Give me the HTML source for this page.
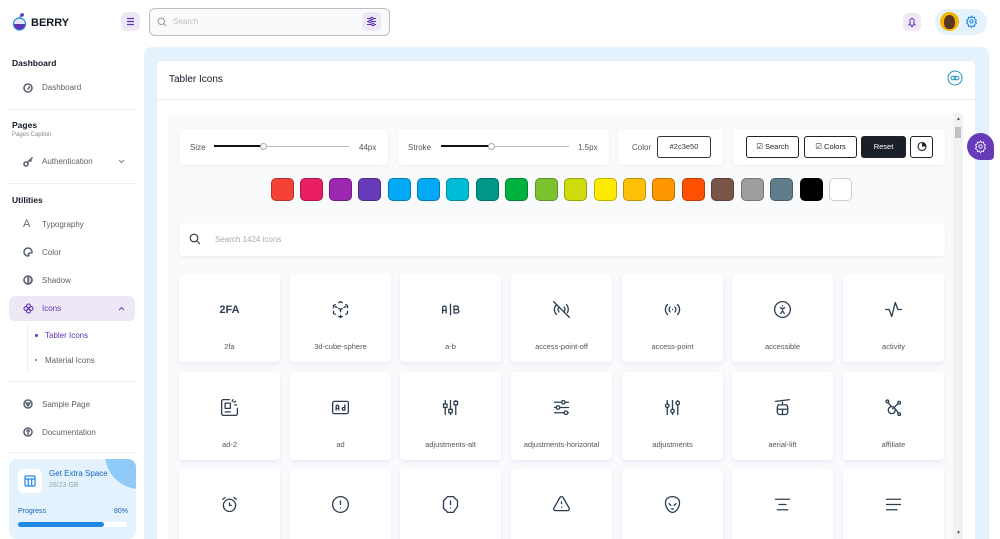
<!DOCTYPE html>
<html><head><meta charset="utf-8"><style>
*{box-sizing:border-box;margin:0;padding:0}
html{overflow:hidden;height:539px}
body{width:1000px;height:539px;overflow:hidden;background:#fff;font-family:"Liberation Sans",sans-serif;position:relative;color:#364152}
.a{position:absolute}
.sec{font-size:8.5px;font-weight:bold;color:#121926}
.it{font-size:8px;color:#616161}
.ic{stroke:#5b6470;fill:none;stroke-width:1.6;stroke-linecap:round;stroke-linejoin:round}
.card{position:absolute;width:101px;height:88px;background:#fff;border-radius:4px;box-shadow:0 2px 4px rgba(120,120,180,.12)}
.card svg{position:absolute;left:40px;top:25px;width:21px;height:21px;stroke:#2c3e50;fill:none;stroke-width:1.5;stroke-linecap:round;stroke-linejoin:round}
.card span{position:absolute;left:0;right:0;top:68px;text-align:center;font-size:7.5px;color:#555}
.panel{position:absolute;top:129px;height:36px;background:#fff;border-radius:4px;box-shadow:0 1px 3px rgba(0,0,0,.06);font-size:8px;color:#555}
.sw{position:absolute;top:178px;width:23px;height:23px;border-radius:5px;border:1px solid rgba(0,0,0,.25)}
.btn{position:absolute;top:136px;height:22px;border:1.3px solid #222;border-radius:3px;font-size:7.5px;color:#222;text-align:center;line-height:20px;background:#fff}
</style></head><body>
<svg class="a" style="left:12px;top:12px" width="16" height="20" viewBox="0 0 16 20"><circle cx="7.5" cy="12" r="6" fill="#e3e7fb" stroke="#1e88e5" stroke-width="1.2"/><path d="M2 12a5.5 5.5 0 0 0 11 0z" fill="#5e35b1"/><path d="M8 6c0-2 2-4 4-4" stroke="#1e88e5" stroke-width="1.3" fill="none"/><circle cx="10" cy="3" r="1.8" fill="#5e35b1"/></svg>
<div class="a" style="left:31px;top:17px;font-size:11px;font-weight:bold;color:#121926">BERRY</div>
<div class="a" style="left:121px;top:12px;width:19px;height:19px;border-radius:5px;background:#ede7f6"><svg width="19" height="19" viewBox="0 0 19 19"><path d="M6 6.5h7M6 9.5h7M6 12.5h7" stroke="#5e35b1" stroke-width="1.2"/></svg></div>
<div class="a" style="left:149px;top:8px;width:241px;height:28px;border:1px solid #bdbdbd;border-radius:6px;background:#f8fafc"></div>
<svg class="a" style="left:157px;top:17px" width="10" height="10" viewBox="0 0 10 10"><circle cx="4.3" cy="4.3" r="3.2" stroke="#999" fill="none"/><path d="M6.7 6.7L9 9" stroke="#999"/></svg>
<div class="a" style="left:173px;top:17px;font-size:8px;color:#c0c0c0">Search</div>
<div class="a" style="left:362px;top:12px;width:19px;height:19px;border-radius:5px;background:#ede7f6"><svg width="19" height="19" viewBox="0 0 19 19" stroke="#5e35b1" fill="none" stroke-width="1"><path d="M5 6.5h9M5 9.5h9M5 12.5h9"/><circle cx="10" cy="6.5" r="1.3" fill="#ede7f6"/><circle cx="8" cy="9.5" r="1.3" fill="#ede7f6"/><circle cx="11" cy="12.5" r="1.3" fill="#ede7f6"/></svg></div>
<div class="a" style="left:903px;top:13px;width:18px;height:18px;border-radius:5px;background:#ede7f6"><svg width="18" height="18" viewBox="0 0 18 18"><path d="M6 12h6l-1-1.5v-3a2 2 0 0 0-4 0v3zM8 13.5h2" stroke="#5e35b1" fill="none" stroke-width="1"/></svg></div>
<div class="a" style="left:935px;top:9px;width:52px;height:26px;border-radius:13px;background:#e3f2fd"></div>
<div class="a" style="left:940px;top:12px;width:19px;height:19px;border-radius:50%;background:#f5b400"><div style="margin:3px 0 0 4px;width:11px;height:14px;border-radius:50% 50% 40% 40%;background:#5a3521"></div></div>
<svg class="a" style="left:965px;top:15px" width="13" height="13" viewBox="0 0 24 24" fill="none" stroke="#1e88e5" stroke-width="2"><circle cx="12" cy="12" r="3"/><path d="M12 2l2 3 3.5-1 .5 3.5 3 2-2 3 2 3-3 2-.5 3.5-3.5-1-2 3-2-3-3.5 1-.5-3.5-3-2 2-3-2-3 3-2 .5-3.5 3.5 1z"/></svg>

<div class="a sec" style="left:12px;top:58px">Dashboard</div>
<svg class="a ic" style="left:23px;top:83px" width="10" height="10" viewBox="0 0 10 10" stroke-width="0.9"><circle cx="5" cy="5" r="4"/><path d="M5 6l1.5-2"/></svg>
<div class="a it" style="left:42px;top:83px">Dashboard</div>
<div class="a" style="left:8px;top:109px;width:128px;height:1px;background:#eee"></div>
<div class="a sec" style="left:12px;top:120px">Pages</div>
<div class="a" style="left:12px;top:132px;font-size:6px;color:#888">Pages Caption</div>
<svg class="a ic" style="left:23px;top:157px" width="10" height="10" viewBox="0 0 10 10" stroke-width="0.9"><circle cx="3" cy="7" r="2"/><path d="M4.5 5.5L9 1M7 3l1 1"/></svg>
<div class="a it" style="left:42px;top:157px">Authentication</div>
<svg class="a" style="left:118px;top:159px" width="7" height="5" viewBox="0 0 7 5"><path d="M1 1l2.5 2.5L6 1" stroke="#777" fill="none" stroke-width=".9"/></svg>
<div class="a" style="left:8px;top:183px;width:128px;height:1px;background:#eee"></div>
<div class="a sec" style="left:12px;top:195px">Utilities</div>
<div class="a" style="left:23px;top:218px;font-size:11px;color:#666">A</div>
<div class="a it" style="left:42px;top:220px">Typography</div>
<svg class="a ic" style="left:23px;top:247px" width="10" height="10" viewBox="0 0 10 10" stroke-width="0.9"><path d="M5 1a4 4 0 1 0 0 8c1 0 1-1 .5-1.5S6 6 7 6h1a1 1 0 0 0 1-1 4 4 0 0 0-4-4z"/></svg>
<div class="a it" style="left:42px;top:248px">Color</div>
<svg class="a ic" style="left:23px;top:275px" width="10" height="10" viewBox="0 0 10 10" stroke-width="0.9"><circle cx="5" cy="5" r="4"/><path d="M5 1a4 4 0 0 1 0 8z" fill="#ccc"/></svg>
<div class="a it" style="left:42px;top:276px">Shadow</div>
<div class="a" style="left:9px;top:296px;width:126px;height:25px;border-radius:6px;background:#ede7f6"></div>
<svg class="a" style="left:23px;top:303px" width="11" height="11" viewBox="0 0 10 10" stroke="#5e35b1" fill="none" stroke-width="1"><circle cx="5" cy="2.7" r="1.8"/><circle cx="5" cy="7.3" r="1.8"/><circle cx="2.7" cy="5" r="1.8"/><circle cx="7.3" cy="5" r="1.8"/></svg>
<div class="a" style="left:42px;top:304px;font-size:8px;color:#5e35b1">Icons</div>
<svg class="a" style="left:118px;top:306px" width="7" height="5" viewBox="0 0 7 5"><path d="M1 4l2.5-2.5L6 4" stroke="#5e35b1" fill="none" stroke-width=".9"/></svg>
<div class="a" style="left:27px;top:323px;width:1px;height:50px;background:#eee"></div>
<div class="a" style="left:35px;top:334px;width:3px;height:3px;border-radius:50%;background:#5e35b1"></div>
<div class="a" style="left:45px;top:331px;font-size:8px;color:#5e35b1">Tabler Icons</div>
<div class="a" style="left:35px;top:359px;width:2px;height:2px;border-radius:50%;background:#777"></div>
<div class="a it" style="left:45px;top:356px">Material Icons</div>
<div class="a" style="left:8px;top:381px;width:128px;height:1px;background:#eee"></div>
<svg class="a ic" style="left:23px;top:399px" width="10" height="10" viewBox="0 0 10 10" stroke-width="0.9"><circle cx="5" cy="5" r="4"/><path d="M3 4l2 3 2-3z"/></svg>
<div class="a it" style="left:42px;top:400px">Sample Page</div>
<svg class="a ic" style="left:23px;top:427px" width="10" height="10" viewBox="0 0 10 10" stroke-width="0.9"><circle cx="5" cy="5" r="4"/><path d="M4 4a1 1 0 1 1 1.3 1L5 6M5 7.3v.1"/></svg>
<div class="a it" style="left:42px;top:428px">Documentation</div>
<div class="a" style="left:8px;top:452px;width:128px;height:1px;background:#f5eeee"></div>
<div class="a" style="left:9px;top:459px;width:127px;height:80px;border-radius:8px;background:#e3f2fd;overflow:hidden"><div style="position:absolute;left:96px;top:-40px;width:70px;height:70px;border-radius:50%;background:#90caf9"></div></div>
<div class="a" style="left:18px;top:469px;width:24px;height:24px;border-radius:5px;background:#fff"><svg width="24" height="24" viewBox="0 0 24 24" stroke="#1e88e5" fill="none" stroke-width="1.2"><rect x="7" y="7" width="10" height="10" rx="1"/><path d="M7 10h10M10.3 10v7M13.7 10v7"/></svg></div>
<div class="a" style="left:49px;top:469px;font-size:8px;color:#1565c0">Get Extra Space</div>
<div class="a" style="left:49px;top:482px;font-size:7px;color:#9aa">28/23 GB</div>
<div class="a" style="left:18px;top:508px;font-size:7px;color:#1565c0">Progress</div>
<div class="a" style="left:114px;top:508px;font-size:7px;color:#1565c0">80%</div>
<div class="a" style="left:18px;top:522px;width:109px;height:5px;border-radius:3px;background:#fff"><div style="width:86px;height:5px;border-radius:3px;background:#1e88e5"></div></div>

<div class="a" style="left:144px;top:47px;width:845px;height:500px;border-radius:8px;background:#e3f2fd"></div>
<div class="a" style="left:156px;top:60px;width:820px;height:490px;border-radius:6px;background:#fff;border:1px solid #e8eef5"></div>
<div class="a" style="left:169px;top:74px;font-size:10px;color:#121926">Tabler Icons</div>
<svg class="a" style="left:947px;top:70px" width="16" height="16" viewBox="0 0 16 16" fill="none" stroke="#2196c3" stroke-width="1"><circle cx="8" cy="8" r="7"/><rect x="4" y="6.3" width="5" height="3.4" rx="1.7"/><rect x="7" y="6.3" width="5" height="3.4" rx="1.7"/></svg>
<div class="a" style="left:157px;top:99px;width:818px;height:1px;background:#eaeaea"></div>
<div class="a" style="left:168px;top:113px;width:786px;height:430px;background:#f8fafc;border-radius:4px"></div>
<div class="a" style="left:953px;top:113px;width:10px;height:426px;background:#f1f1f1"></div>
<div class="a" style="left:955px;top:127px;width:6px;height:11px;background:#c1c1c1"></div>
<div class="a" style="left:956px;top:116px;font-size:5px;color:#555">▲</div>
<div class="a" style="left:956px;top:530px;font-size:5px;color:#555">▼</div>

<div class="panel" style="left:179px;width:209px"><span class="a" style="left:11px;top:14px">Size</span><div class="a" style="left:35px;top:17px;width:135px;height:1px;background:#bbb"></div><div class="a" style="left:35px;top:16px;width:50px;height:2px;background:#111"></div><div class="a" style="left:81px;top:14px;width:7px;height:7px;border-radius:50%;background:#fff;border:1px solid #aaa"></div><span class="a" style="left:180px;top:14px">44px</span></div>
<div class="panel" style="left:398px;width:211px"><span class="a" style="left:10px;top:14px">Stroke</span><div class="a" style="left:43px;top:17px;width:128px;height:1px;background:#bbb"></div><div class="a" style="left:43px;top:16px;width:50px;height:2px;background:#111"></div><div class="a" style="left:90px;top:14px;width:7px;height:7px;border-radius:50%;background:#fff;border:1px solid #aaa"></div><span class="a" style="left:180px;top:14px">1.5px</span></div>
<div class="panel" style="left:618px;width:105px"><span class="a" style="left:14px;top:14px">Color</span><div class="a" style="left:39px;top:7px;width:54px;height:22px;border:1.3px solid #333;border-radius:3px;text-align:center;line-height:19px;font-size:7.5px;color:#333">#2c3e50</div></div>
<div class="panel" style="left:733px;width:212px"></div>
<div class="btn" style="left:746px;width:53px">☑ Search</div>
<div class="btn" style="left:804px;width:53px">☑ Colors</div>
<div class="btn" style="left:861px;width:45px;background:#1b1f2a;color:#fff">Reset</div>
<div class="btn" style="left:910px;width:23px"><svg width="20" height="19" viewBox="0 0 20 19"><circle cx="10" cy="9.5" r="4" fill="none" stroke="#222" stroke-width="1.1"/><path d="M10 9.5V5.5a4 4 0 0 1 4 4z" fill="#222"/></svg></div>
<div class="a" style="left:967px;top:133px;width:27px;height:27px;border-radius:14px 14px 4px 14px;background:#673ab7"><svg width="27" height="27" viewBox="0 0 24 24" fill="none" stroke="#fff" stroke-width="1.5"><g transform="translate(6 6) scale(.5)"><circle cx="12" cy="12" r="3"/><path d="M12 2l2 3 3.5-1 .5 3.5 3 2-2 3 2 3-3 2-.5 3.5-3.5-1-2 3-2-3-3.5 1-.5-3.5-3-2 2-3-2-3 3-2 .5-3.5 3.5 1z"/></g></svg></div>

<div class="sw" style="left:271px;background:#f44336"></div>
<div class="sw" style="left:300px;background:#e91e63"></div>
<div class="sw" style="left:329px;background:#9c27b0"></div>
<div class="sw" style="left:358px;background:#673ab7"></div>
<div class="sw" style="left:388px;background:#03a9f4"></div>
<div class="sw" style="left:417px;background:#03a9f4"></div>
<div class="sw" style="left:446px;background:#00bcd4"></div>
<div class="sw" style="left:476px;background:#009688"></div>
<div class="sw" style="left:505px;background:#00b140"></div>
<div class="sw" style="left:535px;background:#7cc22f"></div>
<div class="sw" style="left:564px;background:#cddc0a"></div>
<div class="sw" style="left:594px;background:#ffeb00"></div>
<div class="sw" style="left:623px;background:#ffc107"></div>
<div class="sw" style="left:652px;background:#ff9800"></div>
<div class="sw" style="left:682px;background:#ff4f00"></div>
<div class="sw" style="left:711px;background:#795548"></div>
<div class="sw" style="left:741px;background:#9e9e9e"></div>
<div class="sw" style="left:770px;background:#607d8b"></div>
<div class="sw" style="left:800px;background:#000"></div>
<div class="sw" style="left:829px;background:#fff;border-color:#ccc"></div>

<div class="a" style="left:179px;top:223px;width:766px;height:33px;background:#fff;border-radius:4px;box-shadow:0 1px 3px rgba(0,0,0,.06)"></div>
<svg class="a" style="left:189px;top:233px" width="12" height="12" viewBox="0 0 12 12"><circle cx="5" cy="5" r="3.8" stroke="#333" fill="none" stroke-width="1.1"/><path d="M8 8l3 3" stroke="#333" stroke-width="1.1"/></svg>
<div class="a" style="left:215px;top:235px;font-size:8px;color:#aaa">Search 1424 icons</div>

<div class="card" style="left:179px;top:274px"><div style="position:absolute;left:0;right:0;top:30px;text-align:center;font-size:11px;font-weight:bold;color:#2c3e50">2FA</div><span>2fa</span></div>
<div class="card" style="left:290px;top:274px"><svg viewBox="0 0 24 24"><path d="M6 17.6l-2-1.1v-2.5M4 10V7.5l2-1.1M10 4.1L12 3l2 1.1M18 6.4l2 1.1V10M20 14v2.5l-2 1.1M14 19.9L12 21l-2-1.1M12 12l2-1.1M18 8.6l-2 1.1M12 12l-2-1.1M6 8.6l2 1.1M12 12v2.5M12 18.5V21"/></svg><span>3d-cube-sphere</span></div>
<div class="card" style="left:400px;top:274px"><svg viewBox="0 0 24 24"><path d="M3 16V10a2 2 0 0 1 4 0v6M3 13h4M12 6v12M16 8h3a2 2 0 0 1 0 4h-3zM16 12h3.5a2 2 0 0 1 0 4H16z"/></svg><span>a-b</span></div>
<div class="card" style="left:511px;top:274px"><svg viewBox="0 0 24 24"><path d="M12 12v.01M14.8 9.2a4 4 0 0 1 .5 4.8M9.2 9.2a4 4 0 0 0 0 5.6M17.7 6.3a8 8 0 0 1 1 9.3M6.3 6.3a8 8 0 0 0 0 11.4M3 3l18 18"/></svg><span>access-point-off</span></div>
<div class="card" style="left:622px;top:274px"><svg viewBox="0 0 24 24"><path d="M12 12v.01M14.8 9.2a4 4 0 0 1 0 5.6M17.7 6.3a8 8 0 0 1 0 11.4M9.2 14.8a4 4 0 0 1 0-5.6M6.3 17.7a8 8 0 0 1 0-11.4"/></svg><span>access-point</span></div>
<div class="card" style="left:732px;top:274px"><svg viewBox="0 0 24 24"><circle cx="12" cy="12" r="9"/><path d="M10 16.5l2-3 2 3M12 13.5V11l2.5-1M12 11l-2.5-1M12 7.5v.01"/></svg><span>accessible</span></div>
<div class="card" style="left:843px;top:274px"><svg viewBox="0 0 24 24"><path d="M3 12h4l3 8 4-16 3 8h4"/></svg><span>activity</span></div>
<div class="card" style="left:179px;top:372px"><svg viewBox="0 0 24 24"><path d="M11.9 3H5a2 2 0 0 0-2 2v14a2 2 0 0 0 2 2h14a2 2 0 0 0 2-2v-6M7 7h6v6H7zM7 17h6M16 3l-1 2M19 5l-2 1M20 9h-2"/></svg><span>ad-2</span></div>
<div class="card" style="left:290px;top:372px"><svg viewBox="0 0 24 24"><rect x="3" y="5" width="18" height="14" rx="2"/><path d="M7 15v-4a1.5 1.5 0 0 1 3 0v4M7 13h3M17 9v6h-1.5a1.5 1.5 0 1 1 1.5-1.5"/></svg><span>ad</span></div>
<div class="card" style="left:400px;top:372px"><svg viewBox="0 0 24 24"><rect x="4" y="8" width="4" height="4"/><path d="M6 4v4M6 12v8"/><rect x="10" y="14" width="4" height="4"/><path d="M12 4v10M12 18v2"/><rect x="16" y="5" width="4" height="4"/><path d="M18 4v1M18 9v11"/></svg><span>adjustments-alt</span></div>
<div class="card" style="left:511px;top:372px"><svg viewBox="0 0 24 24"><circle cx="14" cy="6" r="2"/><path d="M4 6h8M16 6h4"/><circle cx="8" cy="12" r="2"/><path d="M4 12h2M10 12h10"/><circle cx="17" cy="18" r="2"/><path d="M4 18h11M19 18h1"/></svg><span>adjustments-horizontal</span></div>
<div class="card" style="left:622px;top:372px"><svg viewBox="0 0 24 24"><circle cx="6" cy="10" r="2"/><path d="M6 4v4M6 12v8"/><circle cx="12" cy="16" r="2"/><path d="M12 4v10M12 18v2"/><circle cx="18" cy="7" r="2"/><path d="M18 4v1M18 9v11"/></svg><span>adjustments</span></div>
<div class="card" style="left:732px;top:372px"><svg viewBox="0 0 24 24"><path d="M4 5l16-2M12 4v5M7 9h10l1 3v5a3 3 0 0 1-3 3H9a3 3 0 0 1-3-3v-5zM6 14h12M12 14v6"/></svg><span>aerial-lift</span></div>
<div class="card" style="left:843px;top:372px"><svg viewBox="0 0 24 24"><path d="M5.9 6.6l3.6 4M14.4 14l3 4.3M11 13.5l5.7-5.5"/><circle cx="5" cy="5" r="1.5"/><circle cx="18.5" cy="6.5" r="1.5"/><circle cx="18.5" cy="19.5" r="1.5"/><circle cx="10" cy="15" r="4"/></svg><span>affiliate</span></div>
<div class="card" style="left:179px;top:469px"><svg viewBox="0 0 24 24"><circle cx="12" cy="13" r="7"/><path d="M12 10v3h2M7 4L4.3 6M17 4l2.7 2"/></svg></div>
<div class="card" style="left:290px;top:469px"><svg viewBox="0 0 24 24"><circle cx="12" cy="12" r="9"/><path d="M12 8v4M12 16v.01"/></svg></div>
<div class="card" style="left:400px;top:469px"><svg viewBox="0 0 24 24"><path d="M8.7 3h6.6L20 7.7v6.6L15.3 21H8.7L4 16.3V7.7zM12 8v4M12 16v.01"/></svg></div>
<div class="card" style="left:511px;top:469px"><svg viewBox="0 0 24 24"><path d="M12 9v2M12 15v.01M5 19h14a2 2 0 0 0 1.8-2.7L13.7 4a2 2 0 0 0-3.5 0L3.2 16.3A2 2 0 0 0 5 19"/></svg></div>
<div class="card" style="left:622px;top:469px"><svg viewBox="0 0 24 24"><path d="M11 17a2.5 2.5 0 0 0 2 0M12 3C7 3 4 6 4 10c0 5 4 11 8 11s8-6 8-11c0-4-3-7-8-7zM8 11l2 2M16 11l-2 2"/></svg></div>
<div class="card" style="left:732px;top:469px"><svg viewBox="0 0 24 24"><path d="M4 6h16M8 12h8M6 18h12"/></svg></div>
<div class="card" style="left:843px;top:469px"><svg viewBox="0 0 24 24"><path d="M4 6h16M4 12h16M4 18h12"/></svg></div>
</body></html>
